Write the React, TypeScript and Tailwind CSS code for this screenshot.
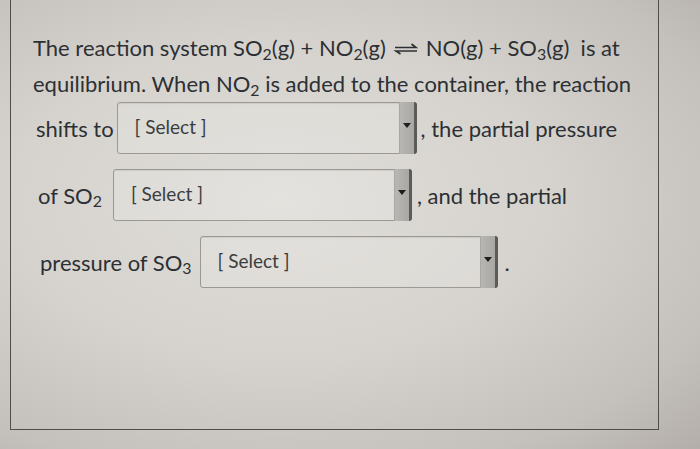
function Select({ w }: { w: string }) {
  return (
    <div
      className={`relative flex h-[52px] ${w} items-center rounded-[3px] border border-[#9c9995] bg-white/15 shadow-[inset_0_1px_1px_rgba(0,0,0,0.08)]`}
    >
      <span className="pl-[17px] pb-[2px] text-[19px] text-[#3a3d40]">[ Select ]</span>
      <div className="absolute top-[-1px] right-[-1px] bottom-[-1px] flex w-[18px] items-center justify-center rounded-r-[3px] border-r-[3px] border-l border-[#5b5b5b] border-l-[#a9a7a4] bg-[linear-gradient(90deg,#b9b7b4,#a9a7a4)]">
        <div className="mt-[-6px] h-0 w-0 border-x-[4px] border-t-[5px] border-x-transparent border-t-[#1e1e1e]" />
      </div>
    </div>
  );
}

function Sub({ children }: { children: string }) {
  return <sub className="text-[0.72em]">{children}</sub>;
}

function Equilibrium() {
  return (
    <svg width="26" height="12" viewBox="0 0 26 12" className="mx-[7px] inline-block align-[1px]">
      <path d="M2 4.5H23L18.5 1" fill="none" stroke="#2c3034" strokeWidth="1.6" />
      <path d="M24 8H3L7.5 11" fill="none" stroke="#2c3034" strokeWidth="1.6" />
    </svg>
  );
}

export default function App() {
  return (
    <div
      className="h-[449px] w-[700px] overflow-hidden bg-[radial-gradient(ellipse_at_40%_45%,#dfddd8_0%,#d6d3ce_45%,#c4c0bb_80%,#b3aea9_100%)]"
      style={{ fontFamily: "Lato, 'Open Sans', sans-serif" }}
    >
      <div className="ml-[10px] h-[430px] w-[649px] border-x border-b border-[#4d4d4d] pt-[30px] pl-[22px] text-[22px] text-[#2c3034]">
        <div className="h-[36px] leading-[36px] whitespace-nowrap">
          The reaction system SO<Sub>2</Sub>(g) + NO<Sub>2</Sub>(g)
          <Equilibrium />
          NO(g) + SO<Sub>3</Sub>(g)&nbsp; is at
        </div>
        <div className="h-[36px] leading-[36px] whitespace-nowrap">
          equilibrium. When NO<Sub>2</Sub> is added to the container, the reaction
        </div>
        <div className="flex items-center whitespace-nowrap">
          <span className="pl-[3px]">shifts to</span>
          <div className="ml-[3px]">
            <Select w="w-[300px]" />
          </div>
          <span className="ml-[4px]">, the partial pressure</span>
        </div>
        <div className="mt-[15px] flex items-center whitespace-nowrap">
          <span className="pl-[5px]">
            of SO<Sub>2</Sub>
          </span>
          <div className="ml-[11px]">
            <Select w="w-[299px]" />
          </div>
          <span className="ml-[5px]">, and the partial</span>
        </div>
        <div className="mt-[15px] flex items-center whitespace-nowrap">
          <span className="pl-[7px]">
            pressure of SO<Sub>3</Sub>
          </span>
          <div className="ml-[8px]">
            <Select w="w-[298px]" />
          </div>
          <span className="ml-[7px]">.</span>
        </div>
      </div>
    </div>
  );
}
